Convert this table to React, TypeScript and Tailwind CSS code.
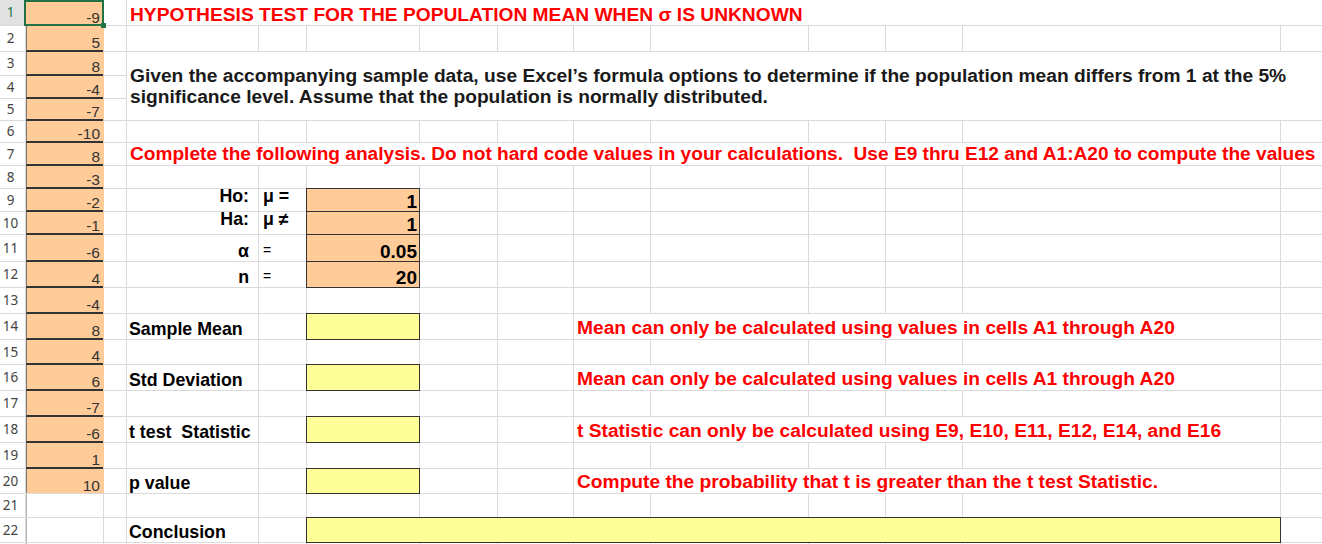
import React from "react";

const A_VALUES = ["-9", "5", "8", "-4", "-7", "-10", "8", "-3", "-2", "-1", "-6", "4", "-4", "8", "4", "6", "-7", "-6", "1", "10"];

function Hdr({ n }: { n: number }) {
  const active = n === 1;
  return (
    <div
      className={
        active
          ? "flex items-center justify-center pr-[4px] bg-[#e1e1e1] text-[#217346] text-[13.5px] font-['Noto_Sans',sans-serif]"
          : "flex items-center justify-center pr-[4px] bg-white text-[#444] text-[13.5px] font-['Noto_Sans',sans-serif]"
      }
    >
      {n <= 22 ? n : ""}
    </div>
  );
}

function ACell({ row }: { row: number }) {
  if (row > 20) return <div className="bg-white border-l border-l-[#b4b4b4]" />;
  const v = A_VALUES[row - 1];
  if (row === 1) {
    return (
      <div className="relative flex items-end justify-end pr-[3px] bg-[#ffcc99] shadow-[1px_0_0_#ffcc99] text-[15.5px] leading-none text-[#333]">
        {v}
        <div className="pointer-events-none absolute -left-[2px] top-0 -right-[1px] -bottom-[1px] border-2 border-[#217346]" />
        <div className="absolute -right-[3px] -bottom-[3px] w-[5px] h-[5px] bg-[#217346]" />
      </div>
    );
  }
  if (row === 20) {
    return (
      <div className="flex items-end justify-end pr-[3px] bg-[#ffcc99] border-l border-l-[#7a7a7a] shadow-[1px_0_0_#ffcc99] text-[15.5px] leading-none text-[#333]">
        {v}
      </div>
    );
  }
  return (
    <div className="flex items-end justify-end pr-[3px] bg-[#ffcc99] border-l border-l-[#7a7a7a] border-b border-b-[#333] shadow-[1px_0_0_#ffcc99,0_1px_0_#333] text-[15.5px] leading-none text-[#333]">
      {v}
    </div>
  );
}

function Blank() {
  return <div className="bg-white" />;
}

function Label({ children }: { children: React.ReactNode }) {
  return (
    <div className="flex items-end bg-white pl-[2px] text-[17.8px] font-bold leading-[1.15] text-black whitespace-pre">
      {children}
    </div>
  );
}

function Note({ children }: { children: React.ReactNode }) {
  return (
    <div className="col-span-5 flex items-end bg-white pl-[3px] text-[19.2px] font-bold leading-[1.15] text-[#ff0000] whitespace-nowrap">
      {children}
    </div>
  );
}

function Yellow() {
  return <div className="bg-[#ffff99] outline outline-1 outline-[#333]" />;
}

function OrangeVal({ v }: { v: string }) {
  return (
    <div className="flex items-end justify-end pr-[2px] bg-[#ffcc99] outline outline-1 outline-[#333] text-[19px] font-bold leading-none text-black">
      {v}
    </div>
  );
}

export default function App() {
  const rows: React.ReactNode[] = [];
  const blanks = (n: number, k: string) =>
    Array.from({ length: n }, (_, i) => <Blank key={k + "-" + i} />);

  for (let r = 1; r <= 23; r++) {
    const cells: React.ReactNode[] = [];
    cells.push(<Hdr key="h" n={r} />);
    cells.push(<ACell key="a" row={r} />);
    cells.push(<Blank key="b" />);
    switch (r) {
      case 1:
        cells.push(
          <div
            key="c"
            className="col-span-11 flex items-end bg-white pl-[3px] text-[19.2px] font-bold leading-none pb-[1px] text-[#ff0000] whitespace-nowrap"
          >
            HYPOTHESIS TEST FOR THE POPULATION MEAN WHEN σ IS UNKNOWN
          </div>
        );
        break;
      case 3:
        cells.push(
          <div
            key="c"
            className="col-span-11 row-span-3 flex items-center bg-white pl-[3px] text-[19.2px] font-bold leading-[21px] text-[#1a1a1a] whitespace-nowrap"
          >
            <div>
              Given the accompanying sample data, use Excel’s formula options to determine if the population mean differs from 1 at the 5%
              <br />
              significance level. Assume that the population is normally distributed.
            </div>
          </div>
        );
        break;
      case 4:
      case 5:
        break;
      case 7:
        cells.push(
          <div
            key="c"
            className="col-span-11 flex items-end bg-white pl-[3px] pb-[2px] text-[19.1px] font-bold leading-none text-[#ff0000] whitespace-pre"
          >
            {"Complete the following analysis. Do not hard code values in your calculations.  Use E9 thru E12 and A1:A20 to compute the values"}
          </div>
        );
        break;
      case 9:
      case 10:
        cells.push(
          <div key="c" className="flex items-start justify-end pr-[9px] bg-white text-[17.8px] font-bold leading-[14px] text-black">
            {r === 9 ? "Ho:" : "Ha:"}
          </div>
        );
        cells.push(
          <div key="d" className="flex items-start pl-[4px] bg-white text-[17.8px] font-bold leading-[14px] text-black whitespace-pre">
            {r === 9 ? "μ =" : "μ ≠"}
          </div>
        );
        cells.push(<OrangeVal key="e" v="1" />);
        cells.push(...blanks(8, "f"));
        break;
      case 11:
      case 12:
        cells.push(
          <div key="c" className="flex items-end justify-end pr-[9px] bg-white text-[17.8px] font-bold leading-[1.15] text-black">
            {r === 11 ? "α" : "n"}
          </div>
        );
        cells.push(
          <div key="d" className="flex items-end pl-[4px] pb-[3px] bg-white text-[14px] leading-[1.15] text-black">
            =
          </div>
        );
        cells.push(<OrangeVal key="e" v={r === 11 ? "0.05" : "20"} />);
        cells.push(...blanks(8, "f"));
        break;
      case 14:
      case 16:
      case 18:
      case 20: {
        const label =
          r === 14 ? "Sample Mean" : r === 16 ? "Std Deviation" : r === 18 ? "t test  Statistic" : "p value";
        const note =
          r === 14 || r === 16
            ? "Mean can only be calculated using values in cells A1 through A20"
            : r === 18
            ? "t Statistic can only be calculated using E9, E10, E11, E12, E14, and E16"
            : "Compute the probability that t is greater than the t test Statistic.";
        cells.push(<Label key="c">{label}</Label>);
        cells.push(<Blank key="d" />);
        cells.push(<Yellow key="e" />);
        cells.push(<Blank key="f" />);
        cells.push(<Blank key="g" />);
        cells.push(<Note key="h">{note}</Note>);
        cells.push(<Blank key="m" />);
        break;
      }
      case 22:
        cells.push(<Label key="c">Conclusion</Label>);
        cells.push(<Blank key="d" />);
        cells.push(<div key="e" className="col-span-8 bg-[#ffff99] outline outline-1 outline-[#333]" />);
        cells.push(<Blank key="m" />);
        break;
      default:
        cells.push(...blanks(11, "x"));
    }
    rows.push(<React.Fragment key={r}>{cells}</React.Fragment>);
  }

  return (
    <div className="w-[1322px] h-[544px] overflow-hidden bg-white font-['Liberation_Sans',Arial,sans-serif]">
      <div className="grid gap-px bg-[#dadada] grid-cols-[25px_77px_22px_131px_47px_112px_77px_75px_76px_157px_76px_76px_317px_1fr] grid-rows-[25px_25px_23px_22px_21px_21px_22px_22px_22px_22px_26px_25px_25px_25px_24px_25px_25px_25px_25px_24px_23px_24px_24px]">
        {rows}
      </div>
    </div>
  );
}
